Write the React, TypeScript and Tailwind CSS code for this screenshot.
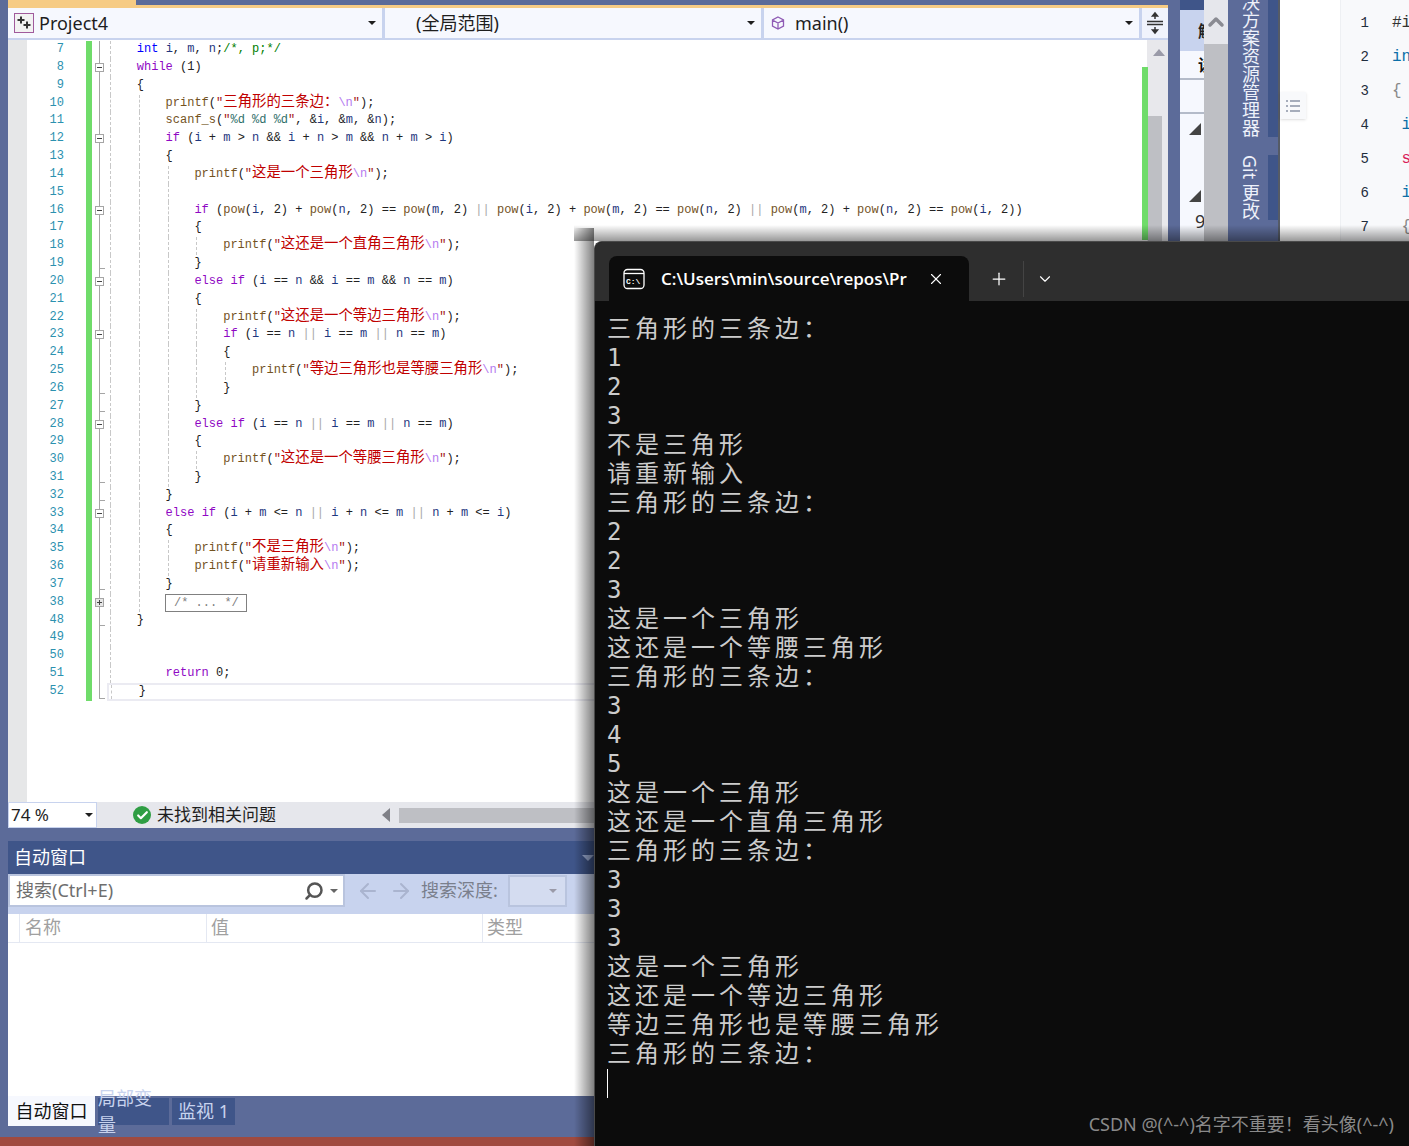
import { ArrowLeft, ArrowRight, Check, ChevronDown, ChevronUp, Pin, Plus, Search, X } from 'lucide-react';

const UI = "[font-family:'Noto_Sans','Noto_Sans_CJK_SC',sans-serif]";
const MONO = "[font-family:'Liberation_Mono','Noto_Sans_CJK_SC',monospace]";

type Row = { n: number; code: string; guides?: number; fold?: 'minus' | 'plus'; tick?: boolean };

const rows: Row[] = [
  { n: 7, code: '    int i, m, n;/*, p;*/' },
  { n: 8, code: '    while (1)', fold: 'minus' },
  { n: 9, code: '    {' },
  { n: 10, code: '        printf("三角形的三条边：\\n");' },
  { n: 11, code: '        scanf_s("%d %d %d", &i, &m, &n);' },
  { n: 12, code: '        if (i + m > n && i + n > m && n + m > i)', fold: 'minus' },
  { n: 13, code: '        {' },
  { n: 14, code: '            printf("这是一个三角形\\n");' },
  { n: 15, code: '', guides: 3 },
  { n: 16, code: '            if (pow(i, 2) + pow(n, 2) == pow(m, 2) || pow(i, 2) + pow(m, 2) == pow(n, 2) || pow(m, 2) + pow(n, 2) == pow(i, 2))', fold: 'minus' },
  { n: 17, code: '            {' },
  { n: 18, code: '                printf("这还是一个直角三角形\\n");' },
  { n: 19, code: '            }', tick: true },
  { n: 20, code: '            else if (i == n && i == m && n == m)', fold: 'minus' },
  { n: 21, code: '            {' },
  { n: 22, code: '                printf("这还是一个等边三角形\\n");' },
  { n: 23, code: '                if (i == n || i == m || n == m)', fold: 'minus' },
  { n: 24, code: '                {' },
  { n: 25, code: '                    printf("等边三角形也是等腰三角形\\n");' },
  { n: 26, code: '                }', tick: true },
  { n: 27, code: '            }', tick: true },
  { n: 28, code: '            else if (i == n || i == m || n == m)', fold: 'minus' },
  { n: 29, code: '            {' },
  { n: 30, code: '                printf("这还是一个等腰三角形\\n");' },
  { n: 31, code: '            }', tick: true },
  { n: 32, code: '        }', tick: true },
  { n: 33, code: '        else if (i + m <= n || i + n <= m || n + m <= i)', fold: 'minus' },
  { n: 34, code: '        {' },
  { n: 35, code: '            printf("不是三角形\\n");' },
  { n: 36, code: '            printf("请重新输入\\n");' },
  { n: 37, code: '        }', tick: true },
  { n: 38, code: '', guides: 2, fold: 'plus' },
  { n: 48, code: '    }', tick: true },
  { n: 49, code: '', guides: 1 },
  { n: 50, code: '', guides: 1 },
  { n: 51, code: '        return 0;', guides: 1 },
  { n: 52, code: '    }', guides: 1 },
];

const terminalLines = [
  '三角形的三条边：', '1', '2', '3', '不是三角形', '请重新输入',
  '三角形的三条边：', '2', '2', '3', '这是一个三角形', '这还是一个等腰三角形',
  '三角形的三条边：', '3', '4', '5', '这是一个三角形', '这还是一个直角三角形',
  '三角形的三条边：', '3', '3', '3', '这是一个三角形', '这还是一个等边三角形',
  '等边三角形也是等腰三角形', '三角形的三条边：',
];

function StringToken({ text }: { text: string }) {
  const parts = text.split(/(\\n|%d|[\u4e00-\u9fff：]+)/).filter(Boolean);
  return (
    <>
      {parts.map((p, i) => {
        if (p === '\\n') return <span key={i} className="text-[#b57bf0]">{p}</span>;
        if (p === '%d') return <span key={i} className="text-[#2f6f6a]">{p}</span>;
        if (/[\u4e00-\u9fff]/.test(p)) return <span key={i} className="text-[14.4px] leading-none text-[#c00000]">{p}</span>;
        return <span key={i} className="text-[#a31515]">{p}</span>;
      })}
    </>
  );
}

function CodeText({ code }: { code: string }) {
  const parts = code.split(/("[^"]*"|\/\*.*\*\/|\|\||\b(?:int|while|if|else|return|printf|scanf_s|pow|i|m|n)\b)/).filter(Boolean);
  return (
    <>
      {parts.map((p, i) => {
        if (p.startsWith('"')) return <StringToken key={i} text={p} />;
        if (p.startsWith('/*')) return <span key={i} className="text-[#008000]">{p}</span>;
        if (p === '||') return <span key={i} className="text-[#a8a8a8]">{p}</span>;
        if (p === 'int') return <span key={i} className="text-[#0000ff]">{p}</span>;
        if (['while', 'if', 'else', 'return'].includes(p)) return <span key={i} className="text-[#8f08c4]">{p}</span>;
        if (['printf', 'scanf_s', 'pow'].includes(p)) return <span key={i} className="text-[#74531f]">{p}</span>;
        if (['i', 'm', 'n'].includes(p)) return <span key={i} className="text-[#1f377f]">{p}</span>;
        return <span key={i} className="text-[#222222]">{p}</span>;
      })}
    </>
  );
}

function CodeRow({ row }: { row: Row }) {
  const indent = row.code.match(/^ */)?.[0].length ?? 0;
  const guides = row.guides ?? Math.floor(indent / 4);
  const last = row.n === 52;
  return (
    <div className={`flex h-[17.83px] leading-[17.83px] text-[12px] ${MONO}`}>
      <div className="w-[37px] text-right text-[#2b91af]">{row.n}</div>
      <div className="w-[22px]" />
      <div className="w-[6px] bg-[#6fdc6a]" />
      <div className="relative w-[16px]">
        <div className={`absolute left-[7px] top-0 w-px bg-[#a5a5a5] ${last ? 'h-[16px]' : 'h-full'}`} />
        {(row.tick || last) && <div className={`absolute left-[8px] h-px w-[5px] bg-[#a5a5a5] ${last ? 'top-[15px]' : 'top-[13px]'}`} />}
        {row.fold && (
          <div className={`absolute left-[3px] top-[4px] flex h-[9px] w-[9px] items-center justify-center border border-[#a5a5a5] ${row.fold === 'plus' ? 'bg-[#e6e6e6]' : 'bg-white'}`}>
            <div className="h-px w-[5px] bg-[#444444]" />
            {row.fold === 'plus' && <div className="absolute h-[5px] w-px bg-[#444444]" />}
          </div>
        )}
      </div>
      <div className={`relative flex-1 whitespace-pre ${last ? 'border-y-2 border-l-2 border-[#ebebf2] -ml-[1px] pl-[1px] leading-[13.83px]' : ''}`}>
        {Array.from({ length: guides }, (_, g) => (
          <div
            key={g}
            className="absolute top-0 h-full border-l border-dashed border-[#c8c8c8]"
            style={{ left: 2 + g * 28.8 }}
          />
        ))}
        {row.n === 38 ? (
          <span className="ml-[57px] inline-block h-[18px] w-[82px] border border-[#808080] bg-white pl-[8px] leading-[16px] text-[#808080]">/* ... */</span>
        ) : (
          <CodeText code={row.code} />
        )}
      </div>
    </div>
  );
}

function Combo({ className, children }: { className: string; children: React.ReactNode }) {
  return (
    <div className={`flex h-[30px] items-center bg-[#f6f8fe] text-[18px] text-[#1e1e1e] ${className}`}>
      {children}
      <div className="ml-auto mr-[6px] h-0 w-0 border-x-[4px] border-t-[4px] border-x-transparent border-t-[#1e1e1e]" />
    </div>
  );
}

function Toolbar() {
  return (
    <div className="flex h-[33px] gap-[3px] bg-[#c8d3ee]">
      <Combo className="w-[374px]">
        <svg className="ml-[6px] mr-[5px] h-[20px] w-[20px]" viewBox="0 0 20 20">
          <rect x="0.5" y="0.5" width="19" height="19" fill="#f2f2f2" stroke="#a05a9c" />
          <path d="M6 3.5h2v2.5h2.500v2h-2.500v2.500h-2v-2.500h-2.500v-2h2.500zM12 8.500h2v2.500h2.500v2h-2.500v2.500h-2v-2.500h-2.500v-2h2.500z" fill="#333333" />
        </svg>
        Project4
      </Combo>
      <Combo className="w-[376px] pl-[31px]">(全局范围)</Combo>
      <Combo className="w-[375px] pl-[7px]">
        <svg className="mr-[10px] h-[14px] w-[14px]" viewBox="0 0 14 14" fill="none" stroke="#8f5bb5" strokeWidth="1.300">
          <path d="M7 1l5.500 3v6L7 13 1.500 10V4zM1.500 4L7 7l5.500-3M7 7v6" />
        </svg>
        main()
      </Combo>
      <div className="flex h-[30px] w-[26px] flex-col items-center justify-center bg-[#f0f3fc] text-[#333333]">
        <svg className="h-[24px] w-[18px]" viewBox="0 0 18 24" fill="none" stroke="#333333" strokeWidth="1.500">
          <path d="M1 10.500h16M1 13.500h16M9 2v6M9 16v6" />
          <path d="M6.500 5L9 2l2.500 3zM6.500 19L9 22l2.500-3z" fill="#333333" />
        </svg>
      </div>
    </div>
  );
}

function Editor() {
  return (
    <div className="relative flex h-[762px] bg-white">
      <div className="w-[19px] shrink-0 bg-[#e6e7e8]" />
      <div className="flex-1 overflow-hidden pt-px">
        {rows.map(row => (
          <CodeRow key={row.n} row={row} />
        ))}
      </div>
      <div className="relative w-[21px] shrink-0 bg-[#e8e8ec]">
        <div className="absolute left-[-5px] top-[27px] h-[173px] w-[6px] bg-[#6fdc6a]" />
        <div className="ml-[6px] mt-[9px] h-0 w-0 border-x-[6px] border-b-[7px] border-x-transparent border-b-[#9a9aa8]" />
        <div className="ml-[1px] mt-[60px] h-[700px] w-[14px] bg-[#bebfc4]" />
      </div>
    </div>
  );
}

function StatusBar() {
  return (
    <div className="flex h-[26px] items-center bg-[#e6e7ec] text-[17px] text-[#1e1e1e]">
      <div className="flex h-[26px] w-[89px] items-center border border-[#c8d3ee] bg-white pl-[2px]">
        74 %
        <div className="ml-auto mr-[3px] h-0 w-0 border-x-[4px] border-t-[4px] border-x-transparent border-t-[#1e1e1e]" />
      </div>
      <div className="ml-[36px] flex h-[18px] w-[18px] items-center justify-center rounded-full bg-[#2f9e44]">
        <Check className="h-[13px] w-[13px] text-white" strokeWidth={4} />
      </div>
      <div className="ml-[6px]">未找到相关问题</div>
      <div className="ml-[106px] h-0 w-0 border-y-[7px] border-r-[8px] border-y-transparent border-r-[#7f8087]" />
      <div className="ml-[9px] h-[15px] flex-1 bg-[#bebfc4]" />
      <div className="w-[8px]" />
    </div>
  );
}

function AutosPanel() {
  return (
    <div className="flex h-[304px] flex-col">
      <div className="flex h-[33px] items-center bg-[#3f5589] pl-[6px] text-[18px] text-white">
        自动窗口
        <div className="ml-[496px] h-0 w-0 border-x-[6px] border-t-[6px] border-x-transparent border-t-[#9fb0d8]" />
        <Pin className="ml-[13px] h-[16px] w-[16px] text-[#9fb0d8]" />
        <X className="ml-[9px] h-[16px] w-[16px] text-[#9fb0d8]" />
      </div>
      <div className="flex h-[40px] items-center bg-[#c8d3ee] pb-[7px]">
        <div className="flex h-[33px] w-[337px] items-center border-2 border-[#b9c4de] bg-white pl-[6px] text-[18px] text-[#6e6e6e]">
          搜索(Ctrl+E)
          <Search className="ml-auto h-[20px] w-[20px] -scale-x-100 text-[#555555]" strokeWidth={3} />
          <div className="ml-[6px] mr-[5px] h-0 w-0 border-x-[4px] border-t-[4px] border-x-transparent border-t-[#666666]" />
        </div>
        <ArrowLeft className="ml-[11px] h-[24px] w-[24px] text-[#aab4cf]" />
        <ArrowRight className="ml-[9px] h-[24px] w-[24px] text-[#aab4cf]" />
        <div className="ml-[8px] text-[18px] text-[#7a7f8c]">搜索深度:</div>
        <div className="ml-[10px] flex h-[32px] w-[59px] items-center justify-end border-2 border-[#b9c4de] bg-[#d4dcf0] pr-[8px]">
          <div className="h-0 w-0 border-x-[4px] border-t-[4px] border-x-transparent border-t-[#9a9aa8]" />
        </div>
      </div>
      <div className="flex h-[29px] items-center border-b border-[#e4e8f2] bg-white text-[18px] text-[#a0a0a0]">
        <div className="h-full w-[12px] border-r border-[#e4e8f2]" />
        <div className="h-full w-[187px] border-r border-[#e4e8f2] pl-[5px]">名称</div>
        <div className="h-full w-[276px] border-r border-[#e4e8f2] pl-[4px]">值</div>
        <div className="h-full flex-1 pl-[4px]">类型</div>
      </div>
      <div className="flex-1 bg-white" />
      <div className="flex h-[41px] items-start bg-[#5c6b99] text-[18px]">
        <div className="flex h-[30px] w-[87px] items-center justify-center bg-[#f6f8fe] text-[#111111]">自动窗口</div>
        <div className="ml-[3px] mt-[2px] flex h-[27px] w-[71px] items-center justify-center bg-[#3f5589] text-[#c8d3ee]">局部变量</div>
        <div className="ml-[3px] mt-[2px] flex h-[27px] w-[63px] items-center justify-center bg-[#3f5589] text-[#c8d3ee]">监视 1</div>
      </div>
    </div>
  );
}

function SolutionStrip() {
  return (
    <div className="flex w-[48px] shrink-0">
      <div className="w-[24px] bg-[#f6f8fe]">
        <div className="h-[10px] bg-[#3f5589]" />
        <div className="flex h-[41px] items-center justify-end overflow-hidden bg-[#c8d3ee] text-[16px] font-bold text-[#222222]">
          <span className="-mr-[10px]">解</span>
        </div>
        <div className="flex h-[29px] items-center justify-end overflow-hidden border-b-2 border-[#b4bbc9] text-[16px] font-bold text-[#111111]">
          <span className="-mr-[10px]">读</span>
        </div>
        <div className="h-[34px] border-b-2 border-[#b4bbc9]" />
        <div className="ml-[9px] mt-[9px] h-0 w-0 border-b-[12px] border-l-[12px] border-b-[#444444] border-l-transparent" />
        <div className="ml-[9px] mt-[55px] h-0 w-0 border-b-[12px] border-l-[12px] border-b-[#444444] border-l-transparent" />
        <div className="ml-[15px] mt-[6px] text-[18px] text-[#333333]">9</div>
      </div>
      <div className="w-[24px] bg-[#e6e7ec]">
        <div className="flex h-[44px] items-center justify-center">
          <ChevronUp className="h-[26px] w-[24px] text-[#8a8b92]" strokeWidth={3.5} />
        </div>
        <div className="h-full bg-[#bebfc4]" />
      </div>
    </div>
  );
}

function SideTabs() {
  return (
    <div className="flex w-[50px] shrink-0 flex-col overflow-hidden bg-[#5c6b99] text-[18px] leading-[44px] text-[#eef1fa]">
      <div className="h-[137px] w-[50px] border-r-[10px] border-[#3f5589]">
        <div className="-mt-[7px] whitespace-nowrap [writing-mode:vertical-rl]">决方案资源管理器</div>
      </div>
      <div className="mt-[18px] h-[65px] w-[50px] border-r-[10px] border-[#3f5589]">
        <div className="whitespace-nowrap [writing-mode:vertical-rl]">Git 更改</div>
      </div>
    </div>
  );
}

function PreviewPane() {
  const lines = [
    { t: '#include', c: 'text-[#333333]' },
    { t: 'int main()', c: 'text-[#0b6fa8]' },
    { t: '{', c: 'text-[#888888]' },
    { t: ' int i', c: 'text-[#0b6fa8]' },
    { t: ' scanf_s', c: 'text-[#d81e5b]' },
    { t: ' if', c: 'text-[#0b6fa8]' },
    { t: ' {', c: 'text-[#888888]' },
  ];
  return (
    <div className="flex min-w-0 flex-1 bg-white">
      <div className="w-[2px] bg-[#555b66]" />
      <div className="w-[60px] shrink-0 pt-[92px]">
        <div className="flex h-[27px] w-[26px] items-center justify-center bg-[#f8f9fb] shadow-sm">
          <svg className="h-[16px] w-[16px]" viewBox="0 0 16 16" stroke="#8a94a6" strokeWidth="1.500">
            <path d="M5 3h10M5 8h10M5 13h10M1 3h2M1 8h2M1 13h2" />
          </svg>
        </div>
      </div>
      <div className={`flex-1 overflow-hidden border-l border-[#eef0f3] bg-[#f8f9fb] pt-[6px] text-[16px] ${MONO}`}>
        {lines.map((line, i) => (
          <div key={i} className="flex h-[34px] items-center whitespace-pre">
            <div className="w-[31px] shrink-0 pr-[3px] text-right text-[14px] text-[#1f2d3d]">{i + 1}</div>
            <div className={`ml-[20px] ${line.c}`}>{line.t}</div>
          </div>
        ))}
      </div>
    </div>
  );
}

function Terminal() {
  return (
    <div className="absolute bottom-0 left-[594px] right-0 top-[241px] flex flex-col overflow-hidden rounded-tl-[8px] border-l border-t border-[#4a4a4a] bg-[#0c0c0c]">
      <div className={`flex h-[59px] shrink-0 items-end bg-[#2e2e2e] pl-[14px] ${"[font-family:'Open_Sans','Noto_Sans',sans-serif]"}`}>
        <div className="flex h-[45px] w-[360px] items-center rounded-t-[8px] bg-[#0c0c0c] pl-[14px] text-white">
          <svg className="h-[22px] w-[22px]" viewBox="0 0 22 22" fill="none" stroke="#ffffff">
            <rect x="1" y="1.500" width="20" height="19" rx="3.500" strokeWidth="1.300" />
            <path d="M1 5.500h20" strokeWidth="1.300" />
            <text x="3" y="16" fill="#ffffff" stroke="none" fontSize="8" fontWeight="700" fontFamily="'Liberation Mono', monospace">C:\</text>
          </svg>
          <div className="ml-[16px] w-[246px] overflow-hidden whitespace-nowrap text-[17px] font-semibold">C:\Users\min\source\repos\Project4</div>
          <X className="ml-[20px] h-[18px] w-[18px]" strokeWidth={1.5} />
        </div>
        <div className="flex h-[45px] items-center text-white">
          <Plus className="ml-[20px] h-[20px] w-[20px]" strokeWidth={1.5} />
          <div className="ml-[14px] h-[36px] w-px bg-[#444444]" />
          <ChevronDown className="ml-[12px] h-[18px] w-[18px]" strokeWidth={1.5} />
        </div>
      </div>
      <div className={`pl-[12px] pt-[14px] text-[24px] leading-[29px] tracking-[4px] text-[#cccccc] ${"[font-family:'DejaVu_Sans_Mono','Noto_Sans_CJK_SC',monospace]"}`}>
        {terminalLines.map((line, i) => (
          <div key={i} className="h-[29px] whitespace-pre [&]:tracking-[4px]">{line}</div>
        ))}
        <div className="h-[29px] w-px bg-white" />
      </div>
    </div>
  );
}

export default function App() {
  return (
    <div className={`relative flex h-[1146px] w-[1409px] overflow-hidden bg-[#5c6b99] ${UI}`}>
      <div className="flex w-[1168px] shrink-0 flex-col pl-[8px]">
        <div className="-ml-[8px] h-[5px] shrink-0 bg-[#5c6b99]">
          <div className="ml-[8px] h-[5px] w-[128px] bg-[#f6cb84]" />
        </div>
        <div className="h-[3px] shrink-0 bg-[#f6cb84]" />
        <Toolbar />
        <Editor />
        <StatusBar />
        <div className="h-[13px] shrink-0" />
        <AutosPanel />
        <div className="-ml-[8px] h-[9px] shrink-0 bg-[#a04a3f]" />
      </div>
      <div className="w-[12px] shrink-0 bg-[#5c6b99]" />
      <SolutionStrip />
      <SideTabs />
      <PreviewPane />
      <div className="absolute bottom-0 left-[574px] top-[228px] w-[20px] bg-gradient-to-r from-transparent to-black/50" />
      <div className="absolute left-[574px] right-0 top-[225px] h-[16px] bg-gradient-to-b from-transparent to-black/40" />
      <Terminal />
      <div className="absolute bottom-[10px] right-[15px] text-[18px] leading-[24px] text-[#8a8a8a]">CSDN @(^-^)名字不重要！看头像(^-^)</div>
    </div>
  );
}
